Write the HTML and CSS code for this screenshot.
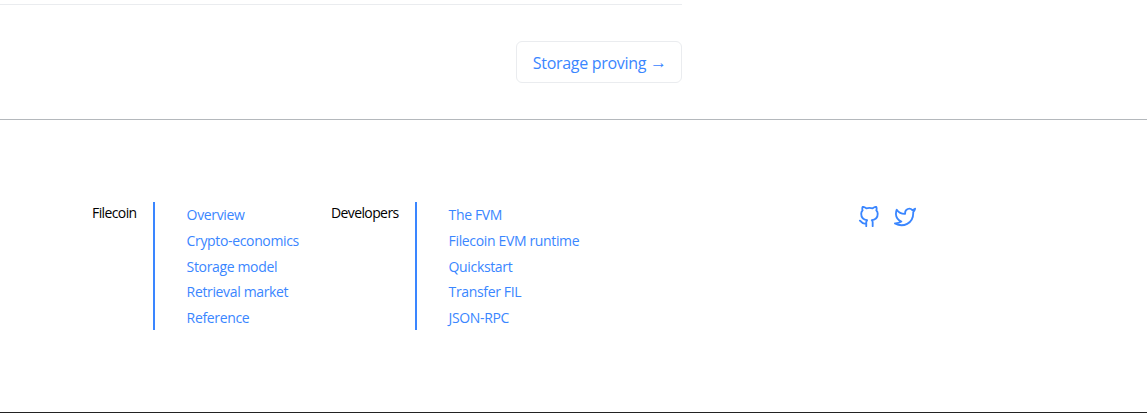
FILE: index.html
```html
<!DOCTYPE html>
<html lang="en">
<head>
    <meta charset="UTF-8">
    <meta name="viewport" content="width=device-width, initial-scale=1.0">
    <title>Filecoin docs</title>
    <link rel="stylesheet" href="styles.css">
</head>
<body>

    <main class="article">
        <div class="pager">
            <a class="pager-next" href="#">Storage proving <span class="arrow">→</span></a>
        </div>
    </main>

    <footer class="footer">
        <div class="footer-group">
            <span class="footer-title">Filecoin</span>
            <ul class="footer-links">
                <li><a href="#">Overview</a></li>
                <li><a href="#">Crypto-economics</a></li>
                <li><a href="#">Storage model</a></li>
                <li><a href="#">Retrieval market</a></li>
                <li><a href="#">Reference</a></li>
            </ul>
        </div>
        <div class="footer-group">
            <span class="footer-title">Developers</span>
            <ul class="footer-links">
                <li><a href="#">The FVM</a></li>
                <li><a href="#">Filecoin EVM runtime</a></li>
                <li><a href="#">Quickstart</a></li>
                <li><a href="#">Transfer FIL</a></li>
                <li><a href="#">JSON-RPC</a></li>
            </ul>
        </div>
        <div class="footer-social">
            <a href="#" aria-label="GitHub">
                <svg class="icon" viewBox="0 0 24 24"><path d="M9 19c-5 1.5-5-2.5-7-3m14 6v-3.87a3.37 3.37 0 0 0-.94-2.61c3.14-.35 6.44-1.54 6.44-7A5.44 5.44 0 0 0 20 4.77 5.07 5.07 0 0 0 19.91 1S18.73.65 16 2.48a13.38 13.38 0 0 0-7 0C6.27.65 5.09 1 5.09 1A5.07 5.07 0 0 0 5 4.77a5.44 5.44 0 0 0-1.5 3.78c0 5.42 3.3 6.61 6.44 7A3.37 3.37 0 0 0 9 18.13V22"/></svg>
            </a>
            <a href="#" aria-label="Twitter">
                <svg class="icon" viewBox="0 0 24 24"><path d="M23 3a10.9 10.9 0 0 1-3 1.53 4.48 4.48 0 0 0-7.86 3v1A10.66 10.66 0 0 1 3 4s-4 9 5 13a11.64 11.64 0 0 1-7 2c9 5 20 0 20-11.5a4.5 4.5 0 0 0-.08-.83A7.72 7.72 0 0 0 23 3z"/></svg>
            </a>
        </div>
    </footer>

    <div class="page-end"></div>

</body>
</html>
```

FILE: styles.css
```css
body {
    margin: 0;
    font-family: "Open Sans", sans-serif;
    font-size: 14px;
    color: #000;
    background: #fff;
}

a {
    color: #3a86ff;
    text-decoration: none;
}

.article {
    width: 682px;
    padding-top: 4px;
}

.pager {
    border-top: 1px solid #eaecef;
    padding-top: 36px;
    padding-bottom: 36px;
    display: flex;
    justify-content: flex-end;
}

.pager-next {
    border: 1px solid #eaecef;
    border-radius: 6px;
    padding: 0 14px 0 16px;
    height: 40px;
    line-height: 42px;
    font-size: 16px;
    letter-spacing: -0.3px;
    white-space: nowrap;
}

.arrow {
    font-family: "Liberation Sans", sans-serif;
    font-size: 17px;
    letter-spacing: 0;
    vertical-align: 1px;
}

.footer {
    border-top: 1px solid #b4b8bc;
    height: 293px;
    box-sizing: border-box;
    padding: 82.45px 0 0 92px;
    display: flex;
    align-items: flex-start;
}

.footer-group {
    display: flex;
    align-items: stretch;
    margin-right: 32px;
}

.footer-title {
    padding-right: 16px;
    border-right: 2px solid #3a86ff;
    line-height: 22px;
    letter-spacing: -0.6px;
}

.footer-links {
    list-style: none;
    margin: 0;
    padding: 0 0 0 32px;
    line-height: 25.6px;
    letter-spacing: -0.35px;
}

.footer-social {
    display: flex;
    gap: 14px;
    margin-left: 247px;
    padding-top: 4px;
}

.icon {
    display: block;
    width: 22px;
    height: 22px;
    fill: none;
    stroke: #3a86ff;
    stroke-width: 2;
    stroke-linecap: round;
    stroke-linejoin: round;
}

.page-end {
    border-top: 1px solid #222;
}
```
